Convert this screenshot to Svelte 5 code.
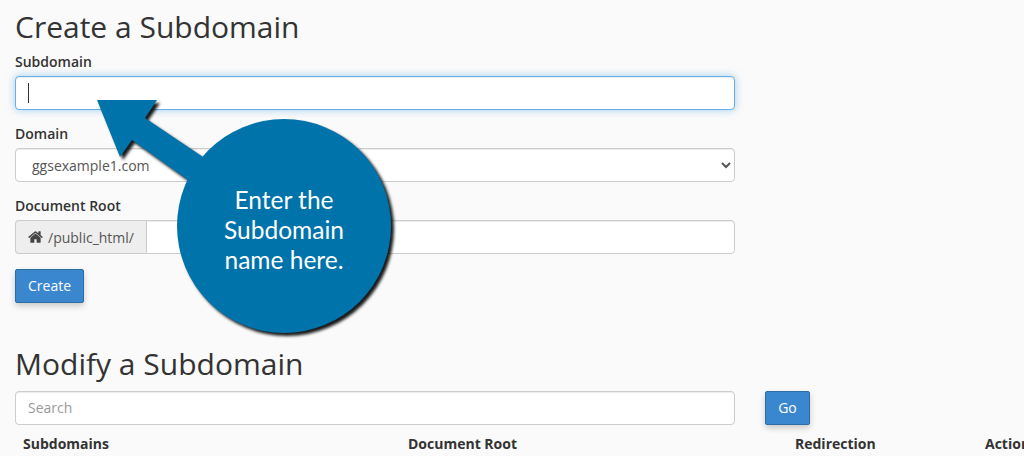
<script lang="ts">
  // cPanel subdomain form with a callout pointing at the first field
  const columns = ['Subdomains', 'Document Root', 'Redirection', 'Actions'];
</script>

<div class="page">
  <h1>Create a Subdomain</h1>

  <div class="field">
    <label for="sub">Subdomain</label>
    <div class="caret-wrap">
      <input id="sub" class="control focused" type="text" />
      <span class="caret"></span>
    </div>
  </div>

  <div class="field">
    <label for="domain">Domain</label>
    <select id="domain" class="control">
      <option>ggsexample1.com</option>
    </select>
  </div>

  <div class="field">
    <label for="root">Document Root</label>
    <div class="group">
      <span class="addon">
        <svg viewBox="0 0 1664 1792" width="15" height="16" aria-hidden="true">
          <path fill="#444" d="M1408 992v480q0 26-19 45t-45 19h-384v-384h-256v384h-384q-26 0-45-19t-19-45v-480q0-1 .5-3t.5-3l575-474 575 474q1 2 1 6zm223-69l-62 74q-8 9-21 11h-3q-13 0-21-7l-692-577-692 577q-12 8-24 7-13-2-21-11l-62-74q-8-10-7-23.500t11-20.500l719-599q32-26 76-26t76 26l244 204v-195q0-14 9-23t23-9h192q14 0 23 9t9 23v408l219 182q10 8 11 21.500t-7 23.500z"/>
        </svg>
        /public_html/
      </span>
      <input id="root" class="control joined" type="text" />
    </div>
  </div>

  <button class="btn create">Create</button>

  <h1 class="second">Modify a Subdomain</h1>

  <div class="search-row">
    <input class="control search" type="text" placeholder="Search" />
    <button class="btn go">Go</button>
  </div>

  <div class="thead">
    {#each columns as col}
      <span>{col}</span>
    {/each}
  </div>

  <div class="callout">
    <svg class="callout-shape" viewBox="0 0 320 250" width="320" height="250" aria-hidden="true">
      <g fill="#0073aa">
        <polygon points="7,10 67,10 55,28 113,67 98,90 42,50 30,67" />
        <circle cx="194" cy="136" r="107" />
      </g>
    </svg>
    <p>Enter the<br />Subdomain<br />name here.</p>
  </div>
</div>

<style>
  :global(body) {
    margin: 0;
    background: #fafafa;
    overflow: hidden;
  }

  .page {
    position: relative;
    height: 456px;
    overflow: hidden;
    padding: 0 15px;
    box-sizing: border-box;
    font-family: "Open Sans", sans-serif;
    font-size: 14px;
    color: #333;
  }

  h1 {
    margin: 0;
    padding-top: 7px;
    font-size: 30px;
    font-weight: 400;
    line-height: 40px;
    color: #333;
  }

  .second {
    padding-top: 0;
    margin-top: 41px;
  }

  .field {
    width: 720px;
    margin-bottom: 14px;
  }

  label {
    display: block;
    font-weight: 600;
    line-height: 20px;
    margin-top: 5px;
    margin-bottom: 4px;
  }

  .control {
    display: block;
    width: 100%;
    height: 34px;
    box-sizing: border-box;
    border: 1px solid #ccc;
    border-radius: 4px;
    background: #fff;
    padding: 6px 12px;
    font-family: inherit;
    font-size: 14px;
    color: #555;
    outline: none;
    box-shadow: inset 0 1px 1px rgba(0, 0, 0, 0.075);
  }

  .focused {
    border-color: #66afe9;
    box-shadow: inset 0 1px 1px rgba(0, 0, 0, 0.075), 0 0 8px rgba(102, 175, 233, 0.6);
  }

  .caret-wrap {
    position: relative;
  }

  .caret {
    position: absolute;
    left: 13px;
    top: 7px;
    width: 1px;
    height: 20px;
    background: #333;
  }

  .group {
    display: flex;
  }

  .addon {
    display: flex;
    align-items: center;
    gap: 5px;
    height: 34px;
    box-sizing: border-box;
    padding: 0 12px;
    border: 1px solid #ccc;
    border-right: 0;
    border-radius: 4px 0 0 4px;
    background: #eee;
    color: #555;
    white-space: nowrap;
  }

  .joined {
    flex: 1;
    min-width: 0;
    border-radius: 0 4px 4px 0;
  }

  .btn {
    height: 34px;
    box-sizing: border-box;
    padding: 0 12px 2px;
    border: 1px solid #2e6da4;
    border-radius: 2px;
    background: #3a87d0;
    color: #fff;
    font-family: inherit;
    font-size: 14px;
    box-shadow: 0 3px 6px rgba(0, 0, 0, 0.2);
  }

  .create {
    display: block;
    width: 69px;
    margin-top: 15px;
  }

  .search-row {
    display: flex;
    gap: 30px;
    margin-top: 7px;
  }

  .search {
    width: 720px;
    flex: none;
    padding: 4px 12px 6px;
  }

  .search::placeholder {
    color: #999;
    opacity: 1;
  }

  .go {
    width: 45px;
    flex: none;
  }

  .thead {
    display: grid;
    grid-template-columns: 385px 387px 190px 100px;
    width: 1062px;
    padding: 9px 8px 0;
    box-sizing: border-box;
    font-weight: 700;
    line-height: 20px;
    white-space: nowrap;
  }

  .callout {
    position: absolute;
    left: 90px;
    top: 90px;
    width: 320px;
    height: 250px;
  }

  .callout-shape {
    display: block;
    filter: drop-shadow(3px 3px 1.5px rgba(0, 0, 0, 0.9));
  }

  .callout p {
    position: absolute;
    left: 94px;
    top: 95px;
    width: 200px;
    margin: 0;
    text-align: center;
    font-family: Lato, "Open Sans", sans-serif;
    font-size: 24.5px;
    line-height: 30px;
    color: #fff;
  }
</style>
